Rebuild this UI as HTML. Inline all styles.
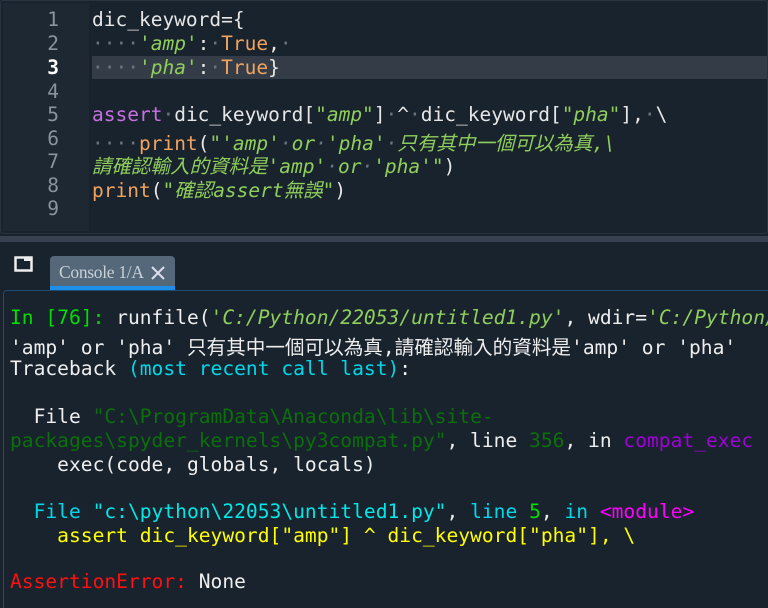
<!DOCTYPE html>
<html><head><meta charset="utf-8"><style>
body{margin:0;width:768px;height:608px;background:#19232d;overflow:hidden;position:relative;font-family:"DejaVu Sans Mono","Liberation Mono","Noto Sans CJK TC",monospace;}
.ed{position:absolute;left:0;top:0;width:768px;height:234px;background:#19232d;border:1px solid #2a3440;box-sizing:border-box;border-radius:3px;overflow:hidden}
.gut{position:absolute;left:2px;top:2px;width:86px;height:228px;background:#1e2832}
.ln{position:absolute;left:0;width:58px;text-align:right;color:#8a949e;font-size:19.5px}
.cl{position:absolute;left:91px;font-size:19.5px;color:#e6e6e6;white-space:pre}
.hl{position:absolute;left:91px;top:55px;width:676px;height:23px;background:#343d47}
.d{color:#6b7580}.s{color:#8fce5c;font-style:italic}.o{color:#f0a35e}.k{color:#c670e0}
.sep{position:absolute;left:0;top:236px;width:768px;height:6px;background:#37414f}
.tab{position:absolute;left:50px;top:256px;width:125px;height:34px;background:#54687a;border-radius:4px 4px 0 0}
.tab span{position:absolute;left:9px;top:6px;font-family:"Liberation Serif",serif;font-size:17.5px;color:#c8d0d8;letter-spacing:-0.3px}
.tab i{position:absolute;left:0;bottom:0;width:125px;height:4px;background:#1e8fe8}
.con{position:absolute;left:3px;top:290px;width:765px;height:318px;border:1px solid #1d4c75;border-right:none;border-bottom:none;border-radius:4px 0 0 0;box-sizing:border-box}
.clip{position:absolute;left:0;top:0;width:768px;height:608px;overflow:hidden}
.c{position:absolute;left:10px;font-size:19.6px;color:#eee;white-space:pre;font-family:"DejaVu Sans Mono","Noto Sans CJK TC",monospace}
.g{color:#00dd00}.cy{color:#00d8e8}.dg{color:#0b6f0b}.pu{color:#a000d8}.mg{color:#ff00ff}.y{color:#ffff00}.r{color:#ff1010}.sc{color:#8fce5c;font-style:italic}
</style></head><body>
<div class="ed">
<div class="gut"></div>
<div class="hl"></div>
<div class="ln" style="top:7px">1</div>
<div class="ln" style="top:31px">2</div>
<div class="ln" style="top:55px;color:#fff;font-weight:bold">3</div>
<div class="ln" style="top:79px">4</div>
<div class="ln" style="top:102px">5</div>
<div class="ln" style="top:126px">6</div>
<div class="ln" style="top:149px">7</div>
<div class="ln" style="top:173px">8</div>
<div class="ln" style="top:196px">9</div>
<div class="cl" style="top:7px">dic_keyword={</div>
<div class="cl" style="top:31px"><span class="d">····</span><span class="s">'amp'</span>:<span class="d">·</span><span class="o">True</span>,<span class="d">·</span></div>
<div class="cl" style="top:55px"><span class="d">····</span><span class="s">'pha'</span>:<span class="d">·</span><span class="o">True</span>}</div>
<div class="cl" style="top:102px"><span class="k">assert</span><span class="d">·</span>dic_keyword[<span class="s">"amp"</span>]<span class="d">·</span>^<span class="d">·</span>dic_keyword[<span class="s">"pha"</span>],<span class="d">·</span>\</div>
<div class="cl" style="top:126px"><span class="d">····</span><span class="o">print</span>(<span class="s">"'amp'<span class="d">·</span>or<span class="d">·</span>'pha'<span class="d">·</span>只有其中一個可以為真,\</span></div>
<div class="cl" style="top:149px"><span class="s">請確認輸入的資料是'amp'<span class="d">·</span>or<span class="d">·</span>'pha'"</span>)</div>
<div class="cl" style="top:173px"><span class="o">print</span>(<span class="s">"確認assert無誤"</span>)</div>
</div>
<div class="sep"></div>
<svg style="position:absolute;left:14px;top:256px" width="20" height="18"><rect x="1.5" y="1.5" width="16" height="13" fill="none" stroke="#eee" stroke-width="2.5"/><rect x="10" y="1" width="8" height="4" fill="#eee"/></svg>
<div class="tab"><span>Console 1/A</span>
<svg style="position:absolute;left:101px;top:10px" width="14" height="14"><path d="M1 1L13 13M13 1L1 13" stroke="#dde" stroke-width="2"/></svg><i></i></div>
<div class="con"></div>
<div class="clip">
<div class="c" style="top:306px"><span class="g">In [76]:</span> runfile(<span class="sc">'C:/Python/22053/untitled1.py'</span>, wdir=<span class="sc">'C:/Python/22053'</span>)</div>
<div class="c" style="top:331px">'amp' or 'pha' 只有其中一個可以為真,請確認輸入的資料是'amp' or 'pha'</div>
<div class="c" style="top:357px">Traceback <span class="cy">(most recent call last)</span>:</div>
<div class="c" style="top:405px">  File <span class="dg">"C:\ProgramData\Anaconda\lib\site-</span></div>
<div class="c" style="top:429px"><span class="dg">packages\spyder_kernels\py3compat.py"</span>, line <span class="dg">356</span>, in <span class="pu">compat_exec</span></div>
<div class="c" style="top:453px">    exec(code, globals, locals)</div>
<div class="c" style="top:500px"><span class="cy">  File </span><span style="color:#00e8e8">"c:\python\22053\untitled1.py"</span>, <span class="cy">line </span><span class="g">5</span>, <span class="cy">in </span><span class="mg">&lt;module&gt;</span></div>
<div class="c" style="top:524px"><span class="y">    assert dic_keyword["amp"] ^ dic_keyword["pha"], \</span></div>
<div class="c" style="top:570px"><span class="r">AssertionError:</span> None</div>
</div>
</body></html>
